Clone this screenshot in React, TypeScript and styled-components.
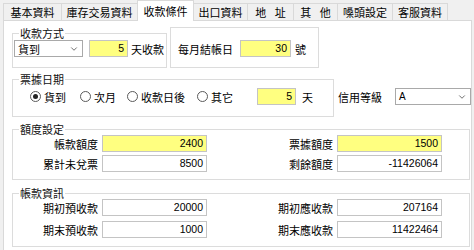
import styled, { createGlobalStyle } from 'styled-components'
import { ChevronDown } from 'lucide-react'

const Global = createGlobalStyle`
  html, body {
    margin: 0;
    padding: 0;
    background: #f0f0f0;
  }
  body {
    font-family: "Noto Sans CJK TC", "Noto Sans", sans-serif;
    font-size: 11px;
    color: #000;
  }
`

const Frame = styled.div`
  width: 474px;
  height: 250px;
  overflow: hidden;
  box-sizing: border-box;
  padding: 0 2px 0 3px;
  display: flex;
  flex-direction: column;
`

const TabBar = styled.div`
  display: flex;
  align-items: flex-end;
  height: 20px;
  flex: none;
`

const Tab = styled.div<{ $w: number; $active?: boolean }>`
  box-sizing: border-box;
  width: ${p => p.$w}px;
  height: ${p => (p.$active ? 21 : 17)}px;
  margin-left: -1px;
  margin-bottom: ${p => (p.$active ? -1 : 0)}px;
  border: 1px solid #d9d9d9;
  border-bottom: none;
  background: ${p => (p.$active ? '#fff' : '#f0f0f0')};
  position: relative;
  z-index: ${p => (p.$active ? 1 : 0)};
  display: flex;
  align-items: center;
  justify-content: center;
  line-height: 12px;
  word-spacing: 6px;
  white-space: pre;

  &:first-child {
    margin-left: 0;
  }
`

const Panel = styled.div`
  flex: 1;
  background: #fff;
  border: 1px solid #d9d9d9;
  border-bottom: none;
  padding: 6px 0 0 8px;
  display: flex;
  flex-direction: column;
`

const Row = styled.div<{ $gap?: number; $mt?: number }>`
  display: flex;
  align-items: flex-start;
  gap: ${p => p.$gap ?? 0}px;
  margin-top: ${p => p.$mt ?? 0}px;
`

const Group = styled.fieldset<{ $w: number; $h: number; $pt?: number }>`
  box-sizing: border-box;
  margin: 0;
  min-width: 0;
  width: ${p => p.$w}px;
  height: ${p => p.$h}px;
  border: 1px solid #dcdcdc;
  padding: ${p => p.$pt ?? 0}px 0 0 0;
`

const Legend = styled.legend`
  margin-left: 6px;
  padding: 0 1px;
  line-height: 12px;
  font-size: 11px;
  color: #111;
`

const Line = styled.div<{ $ml?: number; $mt?: number }>`
  display: flex;
  align-items: center;
  height: 17px;
  margin-left: ${p => p.$ml ?? 0}px;
  margin-top: ${p => p.$mt ?? 0}px;
`

const Text = styled.span<{ $ml?: number }>`
  margin-left: ${p => p.$ml ?? 0}px;
  line-height: 12px;
  white-space: nowrap;
`

const NumBox = styled.div<{ $w: number; $yellow?: boolean; $ml?: number }>`
  box-sizing: border-box;
  width: ${p => p.$w}px;
  height: 17px;
  margin-left: ${p => p.$ml ?? 0}px;
  border: 1px solid #c4c4c4;
  background: ${p => (p.$yellow ? '#ffff80' : '#fff')};
  font-family: "Liberation Sans", Arial, sans-serif;
  font-size: 10.5px;
  text-align: right;
  padding-right: 3px;
  line-height: 15px;
`

const Select = styled.div<{ $w: number; $ml?: number }>`
  box-sizing: border-box;
  width: ${p => p.$w}px;
  height: 17px;
  margin-left: ${p => p.$ml ?? 0}px;
  border: 1px solid #a9a9a9;
  background: #fff;
  display: flex;
  align-items: center;
  justify-content: space-between;
  padding: 0 3px 0 3px;
  line-height: 12px;

  svg {
    color: #555;
  }
`

const SelectValue = styled.span<{ $latin?: boolean }>`
  font-family: ${p =>
    p.$latin ? '"Liberation Sans", Arial, sans-serif' : 'inherit'};
  font-size: ${p => (p.$latin ? 10 : 11)}px;
`

const Radio = styled.label<{ $w: number }>`
  display: flex;
  align-items: center;
  gap: 3px;
  width: ${p => p.$w}px;
  flex: none;
  line-height: 12px;
`

const Dot = styled.span<{ $on?: boolean }>`
  box-sizing: border-box;
  width: 11px;
  height: 11px;
  border-radius: 50%;
  border: 1px solid #5a5a5a;
  background: #fff;
  display: flex;
  align-items: center;
  justify-content: center;

  &::after {
    content: '';
    width: 5px;
    height: 5px;
    border-radius: 50%;
    background: ${p => (p.$on ? '#222' : 'transparent')};
  }
`

const Grid = styled.div<{ $rowGap: number }>`
  display: grid;
  grid-template-columns: 85px 105px 122px 105px;
  column-gap: 4px;
  row-gap: ${p => p.$rowGap}px;
  align-items: center;
`

const Label = styled.span`
  text-align: right;
  line-height: 12px;
  white-space: nowrap;
`

const tabs = ['基本資料', '庫存交易資料', '收款條件', '出口資料', '地 址', '其 他', '嗓頭設定', '客服資料']
const tabWidths = [59, 77, 57, 55, 47, 45, 56, 56]

type Field = { label: string; value: string; yellow?: boolean }

const credit: Field[] = [
  { label: '帳款額度', value: '2400', yellow: true },
  { label: '票據額度', value: '1500', yellow: true },
  { label: '累計未兌票', value: '8500' },
  { label: '剩餘額度', value: '-11426064' },
]

const account: Field[] = [
  { label: '期初預收款', value: '20000' },
  { label: '期初應收款', value: '207164' },
  { label: '期末預收款', value: '1000' },
  { label: '期末應收款', value: '11422464' },
]

const radios = [
  { label: '貨到', w: 50, on: true },
  { label: '次月', w: 47 },
  { label: '收款日後', w: 70 },
  { label: '其它', w: 40 },
]

const FieldGrid = ({ fields, rowGap }: { fields: Field[]; rowGap: number }) => (
  <Grid $rowGap={rowGap}>
    {fields.map(f => [
      <Label key={f.label + 'l'}>{f.label}</Label>,
      <NumBox key={f.label + 'v'} $w={105} $yellow={f.yellow}>
        {f.value}
      </NumBox>,
    ])}
  </Grid>
)

export default function App() {
  return (
    <>
      <Global />
      <Frame>
        <TabBar>
          {tabs.map((t, i) => (
            <Tab key={t} $w={tabWidths[i]} $active={i === 2}>
              {t}
            </Tab>
          ))}
        </TabBar>
        <Panel>
          <Row $gap={3}>
            <Group $w={155} $h={41} $pt={1}>
              <Legend>收款方式</Legend>
              <Line $ml={1}>
                <Select $w={69}>
                  <SelectValue>貨到</SelectValue>
                  <ChevronDown size={10} strokeWidth={2} />
                </Select>
                <NumBox $w={39} $yellow $ml={6}>
                  5
                </NumBox>
                <Text $ml={3}>天收款</Text>
              </Line>
            </Group>
            <Group $w={149} $h={41} $pt={12}>
              <Line $ml={7}>
                <Text>每月結帳日</Text>
                <NumBox $w={51} $yellow $ml={7}>
                  30
                </NumBox>
                <Text $ml={4}>號</Text>
              </Line>
            </Group>
          </Row>

          <Row $mt={5}>
            <Group $w={333} $h={44} $pt={3}>
              <Legend>票據日期</Legend>
              <Line $ml={17}>
                {radios.map(r => (
                  <Radio key={r.label} $w={r.w}>
                    <Dot $on={r.on} />
                    {r.label}
                  </Radio>
                ))}
                <NumBox $w={39} $yellow $ml={20}>
                  5
                </NumBox>
                <Text $ml={6}>天</Text>
              </Line>
            </Group>
            <Line $mt={15}>
              <Text $ml={4}>信用等級</Text>
              <Select $w={76} $ml={13}>
                <SelectValue $latin>A</SelectValue>
                <ChevronDown size={10} strokeWidth={2} />
              </Select>
            </Line>
          </Row>

          <Row $mt={6}>
            <Group $w={458} $h={57}>
              <Legend>額度設定</Legend>
              <FieldGrid fields={credit} rowGap={3} />
            </Group>
          </Row>

          <Row $mt={7}>
            <Group $w={458} $h={60}>
              <Legend>帳款資訊</Legend>
              <FieldGrid fields={account} rowGap={5} />
            </Group>
          </Row>
        </Panel>
      </Frame>
    </>
  )
}
